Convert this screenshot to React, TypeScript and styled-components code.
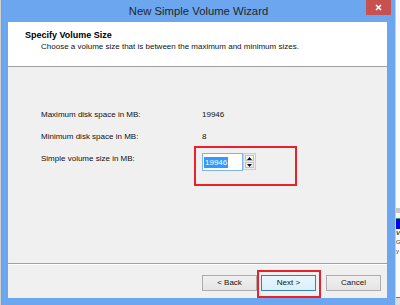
import styled, { createGlobalStyle } from 'styled-components';

const GlobalStyle = createGlobalStyle`
    html, body {
        margin: 0;
        padding: 0;
    }
    body {
        width: 400px;
        height: 305px;
        overflow: hidden;
        background: #f4f4f4;
        font-family: 'Liberation Sans', Arial, sans-serif;
    }
`;

const Screen = styled.div`
    display: flex;
    width: 400px;
    height: 305px;
    overflow: hidden;
`;

const LeftEdge = styled.div`
    flex: none;
    width: 2px;
    background: #cfcfcf;
    border-right: 1px solid #9a9a9a;
    box-sizing: border-box;
`;

const Window = styled.div`
    flex: none;
    width: 393px;
    height: 305px;
    display: flex;
    flex-direction: column;
    background: #6ba6ee;
`;

const TitleBar = styled.div`
    flex: none;
    height: 22px;
    display: grid;
    grid-template-columns: 1fr auto 1fr;
    align-items: start;
`;

const Title = styled.div`
    grid-column: 2;
    line-height: 22px;
    font-size: 11.3px;
    color: #262626;
    white-space: nowrap;
`;

const CloseBtn = styled.div`
    grid-column: 3;
    justify-self: end;
    margin-right: 4px;
    width: 25px;
    height: 15px;
    background: #c75050;
    display: flex;
    align-items: center;
    justify-content: center;
`;

const Frame = styled.div`
    flex: 1;
    margin: 0 8px 7px 6px;
    display: flex;
    flex-direction: column;
    background: #f0f0f0;
`;

const Header = styled.div`
    flex: none;
    height: 45px;
    box-sizing: border-box;
    padding: 7px 0 0 17px;
    background: #ffffff;
    border-bottom: 1px solid #a0a0a0;
`;

const HeadText = styled.div`
    font-size: 9px;
    font-weight: 700;
    line-height: 12px;
    color: #000;
`;

const SubText = styled.div`
    font-size: 8px;
    line-height: 12px;
    padding-left: 16px;
    color: #111;
    white-space: nowrap;
`;

const Body = styled.div`
    position: relative;
    flex: 1;
    padding: 42px 0 0 33px;
    display: grid;
    grid-template-columns: 161px auto;
    grid-auto-rows: min-content;
    row-gap: 10px;
    justify-content: start;
    align-items: start;
`;

const CommonText = styled.span`
    font-size: 8px;
    line-height: 12px;
    color: #111;
    white-space: nowrap;
`;

const SpinBox = styled.div`
    display: flex;
`;

const SpinInput = styled.div`
    width: 41px;
    height: 18px;
    box-sizing: border-box;
    border: 1px solid #7eb4ea;
    background: #fff;
    display: flex;
    align-items: center;
    padding-left: 1px;
`;

const Selected = styled.span`
    font-size: 8px;
    line-height: 11px;
    padding: 0 1px;
    background: #3399ff;
    color: #fff;
`;

const SpinButtons = styled.div`
    width: 13px;
    height: 17px;
    box-sizing: border-box;
    border: 1px solid #cccccc;
    display: flex;
    flex-direction: column;
    gap: 1px;
    padding: 1px;
    background: #ececec;
`;

const SpinBtn = styled.div`
    flex: 1;
    background: linear-gradient(#f8f8f8, #e8e8e8);
    border: 1px solid #c0c0c0;
    box-sizing: border-box;
    display: flex;
    align-items: center;
    justify-content: center;
`;

const Annotation = styled.div<{ $left: number; $top: number; $w: number; $h: number }>`
    position: absolute;
    left: ${(p) => p.$left}px;
    top: ${(p) => p.$top}px;
    width: ${(p) => p.$w}px;
    height: ${(p) => p.$h}px;
    box-sizing: border-box;
    border: 2px solid #e8212d;
    pointer-events: none;
`;

const Footer = styled.div`
    position: relative;
    flex: none;
    height: 35px;
    box-sizing: border-box;
    border-top: 1px solid #a0a0a0;
    box-shadow: inset 0 1px #ffffff;
    padding: 11px 6px 0 0;
    display: flex;
    justify-content: flex-end;
    align-items: flex-start;
`;

const WizardBtn = styled.div<{ $default?: boolean; $gap?: number }>`
    width: 55px;
    height: 16px;
    box-sizing: border-box;
    margin-left: ${(p) => p.$gap ?? 0}px;
    border: 1px solid ${(p) => (p.$default ? '#3c7fb1' : '#acacac')};
    background: ${(p) =>
        p.$default ? 'linear-gradient(#eaf6fd, #d9f0fc)' : 'linear-gradient(#f0f0f0, #e5e5e5)'};
    font-size: 8px;
    line-height: 14px;
    text-align: center;
    color: #111;
`;

const Backdrop = styled.div`
    flex: none;
    width: 5px;
    display: flex;
    flex-direction: column;
    background: #fafafa;
    border-left: 1px solid #cccccc;
    box-sizing: border-box;
    overflow: hidden;
`;

const Strip = styled.div<{ $h: number; $bg: string }>`
    flex: none;
    height: ${(p) => p.$h}px;
    background: ${(p) => p.$bg};
`;

const Fragment = styled.div<{ $italic?: boolean }>`
    flex: none;
    height: 9px;
    font-size: 6px;
    line-height: 9px;
    font-style: ${(p) => (p.$italic ? 'italic' : 'normal')};
    font-weight: ${(p) => (p.$italic ? 700 : 400)};
    color: #333;
    white-space: nowrap;
`;

const App = (): JSX.Element => {
    return (
        <Screen>
            <GlobalStyle />
            <LeftEdge />
            <Window>
                <TitleBar>
                    <Title>New Simple Volume Wizard</Title>
                    <CloseBtn>
                        <svg width="7" height="7" viewBox="0 0 7 7">
                            <path d="M1 1L6 6M6 1L1 6" stroke="#fff" strokeWidth="1.6" />
                        </svg>
                    </CloseBtn>
                </TitleBar>
                <Frame>
                    <Header>
                        <HeadText>Specify Volume Size</HeadText>
                        <SubText>Choose a volume size that is between the maximum and minimum sizes.</SubText>
                    </Header>
                    <Body>
                        <CommonText>Maximum disk space in MB:</CommonText>
                        <CommonText>19946</CommonText>
                        <CommonText>Minimum disk space in MB:</CommonText>
                        <CommonText>8</CommonText>
                        <CommonText>Simple volume size in MB:</CommonText>
                        <SpinBox>
                            <SpinInput>
                                <Selected>19946</Selected>
                            </SpinInput>
                            <SpinButtons>
                                <SpinBtn>
                                    <svg width="5" height="3" viewBox="0 0 5 3">
                                        <path d="M0 3L2.5 0L5 3Z" fill="#111" />
                                    </svg>
                                </SpinBtn>
                                <SpinBtn>
                                    <svg width="5" height="3" viewBox="0 0 5 3">
                                        <path d="M0 0L2.5 3L5 0Z" fill="#111" />
                                    </svg>
                                </SpinBtn>
                            </SpinButtons>
                        </SpinBox>
                        <Annotation $left={186} $top={79} $w={103} $h={40} />
                    </Body>
                    <Footer>
                        <WizardBtn>&lt; Back</WizardBtn>
                        <WizardBtn $default $gap={4}>
                            Next &gt;
                        </WizardBtn>
                        <WizardBtn $gap={10}>Cancel</WizardBtn>
                        <Annotation $left={249} $top={6} $w={64} $h={28} />
                    </Footer>
                </Frame>
            </Window>
            <Backdrop>
                <Strip $h={208} $bg="#fafafa" />
                <Strip $h={5} $bg="#c6c6c6" />
                <Strip $h={5} $bg="#fafafa" />
                <Strip $h={1} $bg="#3aa04a" />
                <Strip $h={10} $bg="#0000e8" />
                <Fragment $italic>V</Fragment>
                <Fragment>G</Fragment>
                <Fragment>y</Fragment>
                <Strip $h={41} $bg="#fafafa" />
                <Strip $h={1} $bg="#3aa04a" />
                <Strip $h={7} $bg="#dcdcdc" />
            </Backdrop>
        </Screen>
    );
};

export default App;
